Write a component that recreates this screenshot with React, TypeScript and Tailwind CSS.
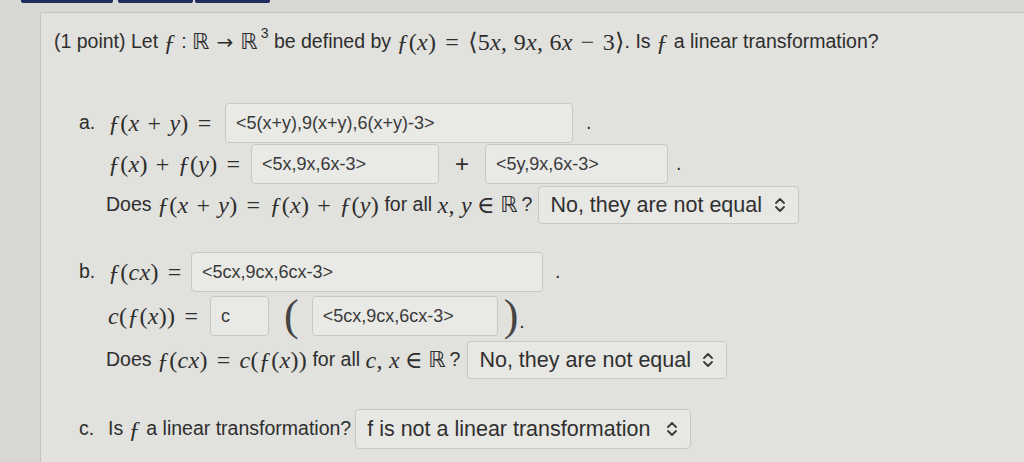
import type { ReactNode } from 'react';

const sans = { fontFamily: '"Liberation Sans", Arial, sans-serif' };

function V({ children }: { children: ReactNode }) {
  return <i className="italic">{children}</i>;
}

// italic f with a tail, as the math renderer draws it
function F() {
  return <i className="italic">ƒ</i>;
}

function Op({ children, eq = false }: { children: ReactNode; eq?: boolean }) {
  return <span className={eq ? 'mx-[9px]' : 'mx-[8px]'}>{children}</span>;
}

function M({ children, className = '' }: { children: ReactNode; className?: string }) {
  return (
    <span
      className={`font-['Liberation_Serif','DejaVu_Serif',serif] text-[24px] leading-none tracking-[0.3px] whitespace-nowrap ${className}`}
    >
      {children}
    </span>
  );
}

function R() {
  return <span className="font-['DejaVu_Sans',sans-serif] text-[22px] leading-none">ℝ</span>;
}

function Box({ value, w }: { value: string; w: string }) {
  return (
    <div
      className={`${w} h-[40px] shrink-0 flex items-center pl-[10px] border border-[#c7c7c5] rounded-[4px] bg-[#e9e9e6] text-[18px] text-[#3a3a3a]`}
    >
      {value}
    </div>
  );
}

function Chevrons() {
  return (
    <svg width="12" height="16" viewBox="0 0 12 16" fill="none" stroke="#3a3a3a" strokeWidth="1.8" strokeLinecap="round" strokeLinejoin="round">
      <path d="M2 6 L6 2 L10 6" />
      <path d="M2 10 L6 14 L10 10" />
    </svg>
  );
}

function Select({ value, extra = 'h-[38px] gap-[11px]' }: { value: string; extra?: string }) {
  return (
    <div
      className={`${extra} shrink-0 flex items-center pl-[11px] pr-[12px] border border-[#c7c7c5] rounded-[4px] bg-[#e7e7e4] text-[21.5px] text-[#303030]`}
    >
      <span>{value}</span>
      <Chevrons />
    </div>
  );
}

export default function App() {
  return (
    <div className="w-[1024px] h-[462px] overflow-hidden bg-[#d7d7d4] text-[#2e2e2e]" style={sans}>
      <div className="flex h-[3px]">
        <div className="ml-[21px] w-[92px] bg-[#1f2b5c] rounded-b-[2px]" />
        <div className="ml-[5px] w-[75px] bg-[#1f2b5c] rounded-b-[2px]" />
        <div className="ml-[2px] w-[75px] bg-[#1f2b5c] rounded-b-[2px]" />
      </div>
      <div className="ml-[40px] mt-[9px] h-[460px] border-t border-l border-[#c4c4c1] bg-[#e1e1dd] pl-[13px] pt-[17px] text-[19.5px]">
        <div className="h-[24px] flex items-center whitespace-nowrap">
          <span>(1 point) Let&nbsp;</span>
          <M><F /></M>
          <span>&nbsp;:&nbsp;</span>
          <R />
          <span className="mx-[7px] font-['DejaVu_Sans',sans-serif] text-[20px] leading-none">→</span>
          <R />
          <span className="text-[14px] relative -top-[9px] ml-[3px]">3</span>
          <span>&nbsp;be defined by&nbsp;</span>
          <M>
            <F />(<V>x</V>)<Op eq>=</Op>⟨5<V>x</V>, 9<V>x</V>, 6<V>x</V><Op>−</Op>3⟩
          </M>
          <span>. Is&nbsp;</span>
          <M><F /></M>
          <span>&nbsp;a linear transformation?</span>
        </div>

        {/* part a */}
        <div className="mt-[49px] flex">
          <div className="w-[54px] pl-[25px] h-[40px] flex items-center">a.</div>
          <div className="flex flex-col gap-[1px]">
            <div className="h-[40px] flex items-center">
              <M className="w-[117px]">
                <F />(<V>x</V><Op>+</Op><V>y</V>)<Op eq>=</Op>
              </M>
              <Box value="<5(x+y),9(x+y),6(x+y)-3>" w="w-[348px]" />
              <span className="ml-[13px]">.</span>
            </div>
            <div className="h-[40px] flex items-center">
              <M className="w-[143px]">
                <F />(<V>x</V>)<Op>+</Op><F />(<V>y</V>)<Op eq>=</Op>
              </M>
              <Box value="<5x,9x,6x-3>" w="w-[188px]" />
              <span className="mx-[16px] text-[24px]">+</span>
              <Box value="<5y,9x,6x-3>" w="w-[183px]" />
              <span className="ml-[8px]">.</span>
            </div>
            <div className="h-[40px] flex items-center whitespace-nowrap">
              <span className="-ml-[2px]">Does&nbsp;</span>
              <M>
                <F />(<V>x</V><Op>+</Op><V>y</V>)<Op eq>=</Op><F />(<V>x</V>)<Op>+</Op><F />(<V>y</V>)
              </M>
              <span>&nbsp;for all&nbsp;</span>
              <M>
                <V>x</V>, <V>y</V><span className="mx-[5px]">∈</span>
              </M>
              <R />
              <span className="ml-[4px] mr-[6px]">?</span>
              <Select value="No, they are not equal" extra="h-[38px] gap-[12px]" />
            </div>
          </div>
        </div>

        {/* part b */}
        <div className="mt-[27px] flex">
          <div className="w-[54px] pl-[25px] h-[40px] flex items-center">b.</div>
          <div className="flex flex-col gap-[1px]">
            <div className="h-[40px] flex items-center">
              <M className="w-[83px]">
                <F />(<V>cx</V>)<Op eq>=</Op>
              </M>
              <Box value="<5cx,9cx,6cx-3>" w="w-[352px]" />
              <span className="ml-[12px]">.</span>
            </div>
            <div className="h-[46px] flex items-center">
              <M className="w-[102px]">
                <V>c</V>(<F />(<V>x</V>))<Op eq>=</Op>
              </M>
              <Box value="c" w="w-[59px]" />
              <span className="ml-[15px] mr-[13px] font-['Liberation_Serif',serif] text-[44px] font-light leading-none text-[#444]">(</span>
              <Box value="<5cx,9cx,6cx-3>" w="w-[186px]" />
              <span className="ml-[6px] font-['Liberation_Serif',serif] text-[44px] font-light leading-none text-[#444]">)</span>
              <span className="ml-[1px] mt-[12px]">.</span>
            </div>
            <div className="h-[40px] flex items-center whitespace-nowrap">
              <span className="-ml-[2px]">Does&nbsp;</span>
              <M>
                <F />(<V>cx</V>)<Op eq>=</Op><V>c</V>(<F />(<V>x</V>))
              </M>
              <span>&nbsp;for all&nbsp;</span>
              <M>
                <V>c</V>, <V>x</V><span className="mx-[5px]">∈</span>
              </M>
              <R />
              <span className="ml-[4px] mr-[7px]">?</span>
              <Select value="No, they are not equal" />
            </div>
          </div>
        </div>

        {/* part c */}
        <div className="mt-[29px] flex">
          <div className="w-[54px] pl-[25px] h-[40px] flex items-center">c.</div>
          <div className="h-[40px] flex items-center whitespace-nowrap">
            <span>Is&nbsp;</span>
            <M><F /></M>
            <span>&nbsp;a linear transformation?</span>
            <span className="w-[4px]" />
            <Select value="f is not a linear transformation" extra="h-[40px] gap-[16px]" />
          </div>
        </div>
      </div>
    </div>
  );
}
